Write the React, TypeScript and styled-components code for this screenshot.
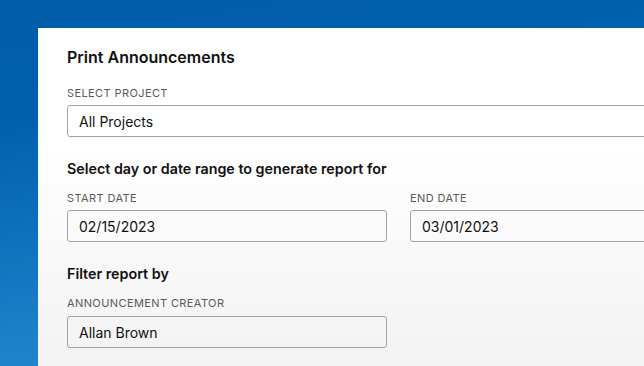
import React from 'react';
import styled, { createGlobalStyle } from 'styled-components';

const GlobalStyle = createGlobalStyle`
  html, body {
    margin: 0;
    padding: 0;
  }
  body {
    font-family: Inter, "Liberation Sans", Arial, sans-serif;
    -webkit-font-smoothing: antialiased;
  }
`;

const Page = styled.div`
  width: 644px;
  height: 366px;
  overflow: hidden;
  box-sizing: border-box;
  padding: 28px 0 0 38px;
  background: linear-gradient(170deg, #005ca8 0%, #0060ac 25%, #1a80c8 70%, #2c8fd4 100%);
`;

const Panel = styled.div`
  width: 760px;
  height: 400px;
  box-sizing: border-box;
  padding: 20px 29px;
  background: linear-gradient(180deg, #ffffff 0%, #ffffff 30%, #efefef 100%);
  display: flex;
  flex-direction: column;
`;

const Title = styled.h1`
  margin: 0 0 19px;
  font-size: 16px;
  font-weight: 600;
  line-height: 19px;
  color: #111;
`;

const SectionTitle = styled.h2`
  margin: 0 0 14px;
  font-size: 14.3px;
  font-weight: 600;
  line-height: 17px;
  color: #111;
`;

const Field = styled.div<{ $width: number; $gap?: number }>`
  width: ${p => p.$width}px;
  display: flex;
  flex-direction: column;
  gap: ${p => p.$gap ?? 5}px;
`;

const Label = styled.label`
  font-size: 11px;
  line-height: 14px;
  color: #5a5a5a;
  text-transform: uppercase;
  letter-spacing: 0.4px;
`;

const Input = styled.div`
  height: 32px;
  box-sizing: border-box;
  border: 1px solid #a3a3a3;
  border-radius: 3px;
  padding: 0 11px;
  display: flex;
  align-items: center;
  font-size: 14px;
  color: #111;
  background: transparent;
`;

const Row = styled.div<{ $mb: number }>`
  display: flex;
  gap: 23px;
  margin-bottom: ${p => p.$mb}px;
`;

export default function App() {
  return (
    <>
      <GlobalStyle />
      <Page>
        <Panel>
          <Title>Print Announcements</Title>
          <Row $mb={23}>
            <Field $width={663}>
              <Label>Select Project</Label>
              <Input>All Projects</Input>
            </Field>
          </Row>
          <SectionTitle>Select day or date range to generate report for</SectionTitle>
          <Row $mb={23}>
            <Field $width={320}>
              <Label>Start Date</Label>
              <Input>02/15/2023</Input>
            </Field>
            <Field $width={320}>
              <Label>End Date</Label>
              <Input>03/01/2023</Input>
            </Field>
          </Row>
          <SectionTitle>Filter report by</SectionTitle>
          <Row $mb={0}>
            <Field $width={320} $gap={6}>
              <Label>Announcement Creator</Label>
              <Input>Allan Brown</Input>
            </Field>
          </Row>
        </Panel>
      </Page>
    </>
  );
}
